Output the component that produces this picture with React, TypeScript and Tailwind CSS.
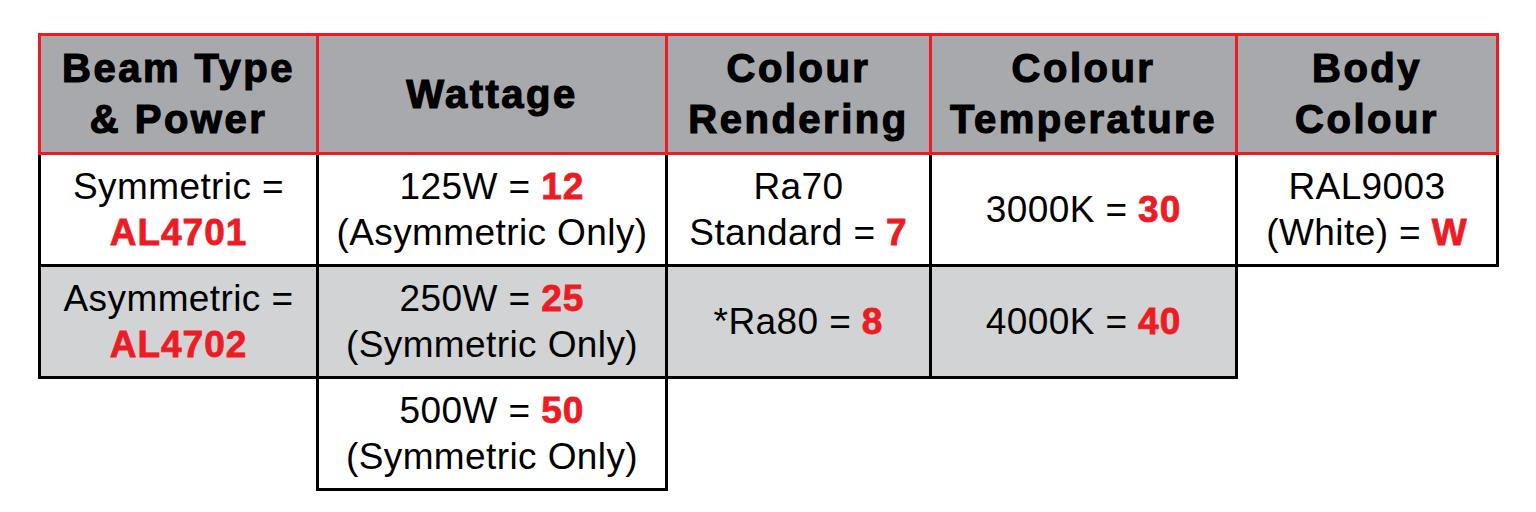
import type { ReactNode } from 'react';

function Head({ children }: { children: ReactNode }) {
  return (
    <div className="relative z-10 -mr-[3px] -mb-[3px] flex items-center justify-center border-[3px] border-[#ed1c24] bg-[#a7a9ac] text-center text-[40px] font-bold leading-[51px] tracking-[2.5px] text-black [-webkit-text-stroke:1.2px_#000]">
      <div>{children}</div>
    </div>
  );
}

function Cell({ children, shade, className = '' }: { children: ReactNode; shade?: boolean; className?: string }) {
  return (
    <div
      className={`-mr-[3px] -mb-[3px] flex items-center justify-center border-[3px] border-black text-center text-[37px] leading-[46px] tracking-[0.4px] text-black ${
        shade ? 'bg-[#d1d3d4]' : 'bg-white'
      } ${className}`}
    >
      <div>{children}</div>
    </div>
  );
}

function Code({ children }: { children: ReactNode }) {
  return <span className="font-bold tracking-[1px] text-[#ed1c24] [-webkit-text-stroke:0.8px_#ed1c24]">{children}</span>;
}

export default function App() {
  return (
    <div className="h-[512px] w-[1536px] bg-white pl-[38px] pt-[33px] font-['Liberation_Sans',Arial,Helvetica,sans-serif]">
      <div className="grid grid-cols-[278px_349px_264px_306px_261px] grid-rows-[119px_112px_112px_112px]">
        <Head>
          Beam Type
          <br />& Power
        </Head>
        <Head>Wattage</Head>
        <Head>
          Colour
          <br />
          Rendering
        </Head>
        <Head>
          Colour
          <br />
          Temperature
        </Head>
        <Head>
          Body
          <br />
          Colour
        </Head>

        <Cell>
          Symmetric =
          <br />
          <Code>AL4701</Code>
        </Cell>
        <Cell>
          125W = <Code>12</Code>
          <br />
          (Asymmetric Only)
        </Cell>
        <Cell>
          Ra70
          <br />
          Standard = <Code>7</Code>
        </Cell>
        <Cell>
          3000K = <Code>30</Code>
        </Cell>
        <Cell>
          RAL9003
          <br />
          (White) = <Code>W</Code>
        </Cell>

        <Cell shade>
          Asymmetric =
          <br />
          <Code>AL4702</Code>
        </Cell>
        <Cell shade>
          250W = <Code>25</Code>
          <br />
          (Symmetric Only)
        </Cell>
        <Cell shade>
          *Ra80 = <Code>8</Code>
        </Cell>
        <Cell shade>
          4000K = <Code>40</Code>
        </Cell>

        <Cell className="col-start-2 row-start-4">
          500W = <Code>50</Code>
          <br />
          (Symmetric Only)
        </Cell>
      </div>
    </div>
  );
}
